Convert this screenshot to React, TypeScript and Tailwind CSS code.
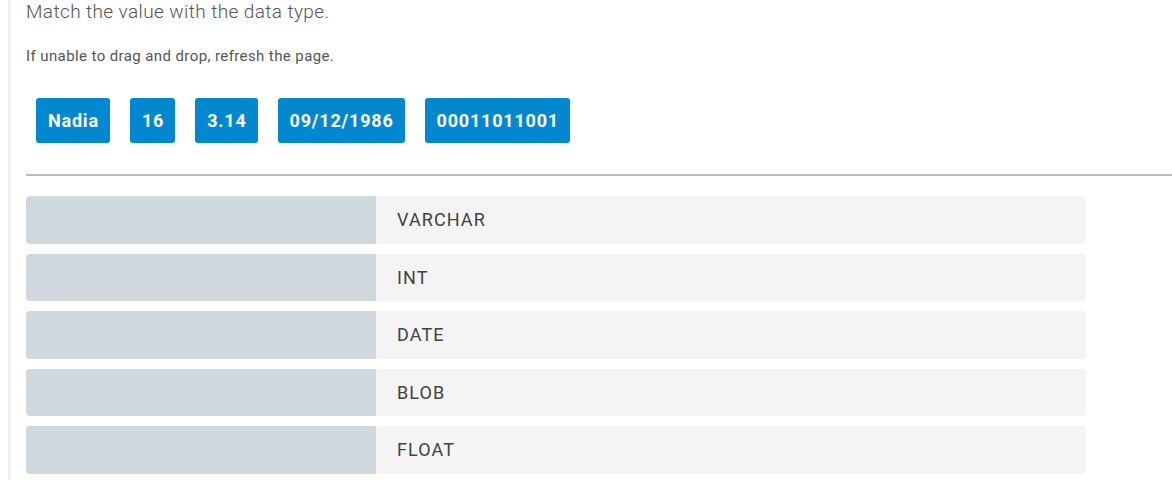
import React from "react";

const values = ["Nadia", "16", "3.14", "09/12/1986", "00011011001"];
const types = ["VARCHAR", "INT", "DATE", "BLOB", "FLOAT"];

const App = () => {
  return (
    <div className="h-[480px] w-[1172px] overflow-hidden bg-white font-['Roboto',sans-serif]">
      <div className="ml-[8px] h-full border-l-[3px] border-[#efefef] pl-[15px]">
        <h1 className="text-[19px] leading-[24px] font-light tracking-[0.4px] text-[#555555]">
          Match the value with the data type.
        </h1>
        <p className="mt-[22px] text-[15px] leading-[20px] tracking-[0.4px] text-[#555555]">
          If unable to drag and drop, refresh the page.
        </p>
        <div className="mt-[32px] flex">
          {values.map((v) => (
            <div
              key={v}
              className="mx-[10px] flex h-[45px] items-center rounded-[3px] bg-[#0288d1] pl-[12px] pr-[11px] text-[18px] font-bold tracking-[0.8px] text-white"
            >
              {v}
            </div>
          ))}
        </div>
        <hr className="mt-[31px] border-0 border-t-2 border-[#bdbdbd]" />
        <div className="mt-[20px] w-[1060px]">
          {types.map((t) => (
            <div key={t} className="mb-[10px] flex h-[47.5px] overflow-hidden rounded-[4px]">
              <div className="w-[350px] bg-[#cfd8dc]" />
              <div className="flex flex-1 items-center bg-[#f4f4f4] pl-[21px] text-[18px] tracking-[1.1px] text-[#424242]">
                {t}
              </div>
            </div>
          ))}
        </div>
      </div>
    </div>
  );
};

export default App;
